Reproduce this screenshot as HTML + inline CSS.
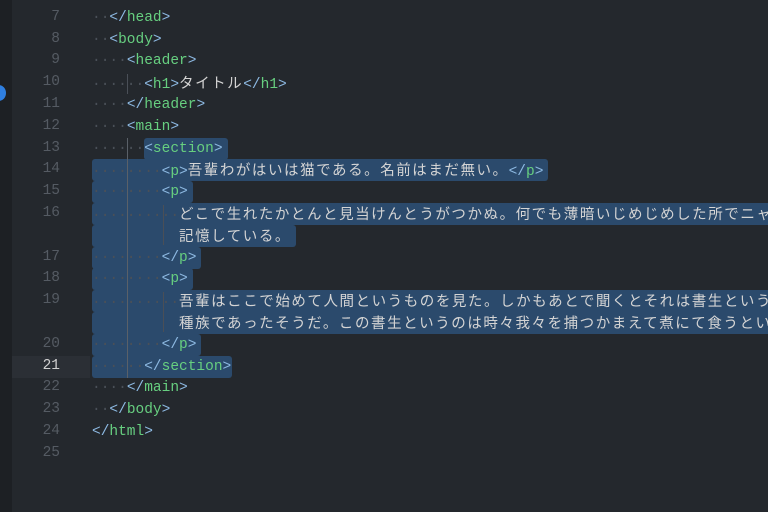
<!DOCTYPE html>
<html><head><meta charset="utf-8"><style>
html,body{margin:0;padding:0;width:768px;height:512px;overflow:hidden;background:#24282d;}
.wrap{position:absolute;left:0;top:0;width:768px;height:512px;overflow:hidden;}
.side{position:absolute;left:0;top:0;width:12px;height:512px;background:#1d2024;}
.dot{position:absolute;left:-8px;top:85px;width:14px;height:16px;border-radius:50%;background:#2f7fe0;}
.cur{position:absolute;left:12px;top:356px;width:78px;height:22px;background:#2b2f35;}
.num{position:absolute;left:12px;width:48px;text-align:right;font:14.5px "Liberation Mono",monospace;color:#555b63;line-height:21.8px;}
.num.a{color:#d0d0d0;}
.row{position:absolute;left:92px;width:676px;overflow:hidden;white-space:pre;font:14.5px "Liberation Mono","Noto Sans CJK JP",monospace;color:#d4d4d4;line-height:22px;height:22px;}
.s{display:inline-block;background:#2b4a6c;border-radius:3px;padding-right:5px;height:22px;vertical-align:top;}
.d{color:#4a5058;}
.b{color:#8db9e2;}
.g{color:#67cf80;}
.j{font-family:"Noto Sans CJK JP",sans-serif;letter-spacing:1.55px;font-size:14.5px;}
.guide{position:absolute;width:1px;background:#4a4f57;}
</style></head><body><div class="wrap">
<div class="side"></div><div class="dot"></div>
<div class="cur"></div>
<div class="num" style="top:-15px">6</div>
<div class="num" style="top:7px">7</div>
<div class="num" style="top:29px">8</div>
<div class="num" style="top:50px">9</div>
<div class="num" style="top:72px">10</div>
<div class="num" style="top:94px">11</div>
<div class="num" style="top:116px">12</div>
<div class="num" style="top:138px">13</div>
<div class="num" style="top:159px">14</div>
<div class="num" style="top:181px">15</div>
<div class="num" style="top:203px">16</div>
<div class="num" style="top:247px">17</div>
<div class="num" style="top:268px">18</div>
<div class="num" style="top:290px">19</div>
<div class="num" style="top:334px">20</div>
<div class="num a" style="top:356px">21</div>
<div class="num" style="top:377px">22</div>
<div class="num" style="top:399px">23</div>
<div class="num" style="top:421px">24</div>
<div class="num" style="top:443px">25</div>

<div class="row" style="top:-15px"><span class="d">····</span><span class="b">&lt;</span><span class="g">title</span><span class="b">&gt;</span>Document<span class="b">&lt;/</span><span class="g">title</span><span class="b">&gt;</span></div>
<div class="row" style="top:7px"><span class="d">··</span><span class="b">&lt;/</span><span class="g">head</span><span class="b">&gt;</span></div>
<div class="row" style="top:29px"><span class="d">··</span><span class="b">&lt;</span><span class="g">body</span><span class="b">&gt;</span></div>
<div class="row" style="top:50px"><span class="d">····</span><span class="b">&lt;</span><span class="g">header</span><span class="b">&gt;</span></div>
<div class="row" style="top:72px"><span class="d">······</span><span class="b">&lt;</span><span class="g">h1</span><span class="b">&gt;</span><span class="j">タイトル</span><span class="b">&lt;/</span><span class="g">h1</span><span class="b">&gt;</span></div>
<div class="row" style="top:94px"><span class="d">····</span><span class="b">&lt;/</span><span class="g">header</span><span class="b">&gt;</span></div>
<div class="row" style="top:116px"><span class="d">····</span><span class="b">&lt;</span><span class="g">main</span><span class="b">&gt;</span></div>
<div class="row" style="top:138px"><span class="d">······</span><span class="s"><span class="b">&lt;</span><span class="g">section</span><span class="b">&gt;</span></span></div>
<div class="row" style="top:159px"><span class="s"><span class="d">········</span><span class="b">&lt;</span><span class="g">p</span><span class="b">&gt;</span><span class="j">吾輩わがはいは猫である。名前はまだ無い。</span><span class="b">&lt;/</span><span class="g">p</span><span class="b">&gt;</span></span></div>
<div class="row" style="top:181px"><span class="s"><span class="d">········</span><span class="b">&lt;</span><span class="g">p</span><span class="b">&gt;</span></span></div>
<div class="row" style="top:203px"><span class="s" style="width:700px"><span class="d">··········</span><span class="j">どこで生れたかとんと見当けんとうがつかぬ。何でも薄暗いじめじめした所でニャーニャー</span></span></div>
<div class="row" style="top:225px"><span class="s"><span class="d">          </span><span class="j">記憶している。</span></span></div>
<div class="row" style="top:247px"><span class="s"><span class="d">········</span><span class="b">&lt;/</span><span class="g">p</span><span class="b">&gt;</span></span></div>
<div class="row" style="top:268px"><span class="s"><span class="d">········</span><span class="b">&lt;</span><span class="g">p</span><span class="b">&gt;</span></span></div>
<div class="row" style="top:290px"><span class="s" style="width:700px"><span class="d">··········</span><span class="j">吾輩はここで始めて人間というものを見た。しかもあとで聞くとそれは書生という人間中</span></span></div>
<div class="row" style="top:312px"><span class="s" style="width:700px"><span class="d">          </span><span class="j">種族であったそうだ。この書生というのは時々我々を捕つかまえて煮にて食うという話</span></span></div>
<div class="row" style="top:334px"><span class="s"><span class="d">········</span><span class="b">&lt;/</span><span class="g">p</span><span class="b">&gt;</span></span></div>
<div class="row" style="top:356px"><span class="s" style="padding-right:1px"><span class="d">······</span><span class="b">&lt;/</span><span class="g">section</span><span class="b">&gt;</span></span></div>
<div class="row" style="top:377px"><span class="d">····</span><span class="b">&lt;/</span><span class="g">main</span><span class="b">&gt;</span></div>
<div class="row" style="top:399px"><span class="d">··</span><span class="b">&lt;/</span><span class="g">body</span><span class="b">&gt;</span></div>
<div class="row" style="top:421px"><span class="b">&lt;/</span><span class="g">html</span><span class="b">&gt;</span></div>

<div class="guide" style="left:127px;top:138px;height:240px;background:#5a6068"></div>
<div class="guide" style="left:163px;top:205px;height:40px"></div>
<div class="guide" style="left:163px;top:292px;height:40px"></div>
<div class="guide" style="left:127px;top:74px;height:20px"></div>
</div></body></html>
